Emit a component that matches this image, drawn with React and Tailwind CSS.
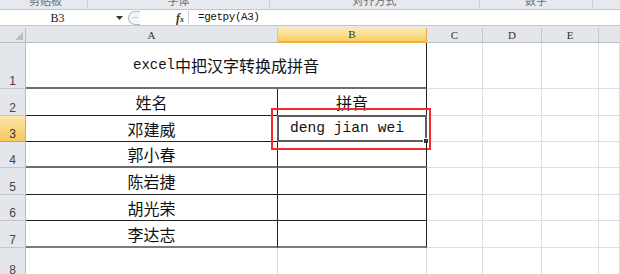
import React from "react";

const CJK = { fontFamily: '"Noto Sans CJK SC", "Noto Sans", sans-serif' };

const rows = [
  { n: 1, h: 46, title: true, bb: "border-b-2 border-b-[#6e6e6e]" },
  { n: 2, h: 27, a: "姓名", b: "拼音", bb: "border-b border-b-[#222]" },
  { n: 3, h: 26, a: "邓建威", b: "deng jian wei", sel: true, bb: "border-b border-b-[#222]" },
  { n: 4, h: 26, a: "郭小春", bb: "border-b-2 border-b-[#6e6e6e]" },
  { n: 5, h: 27, a: "陈岩捷", bb: "border-b border-b-[#222]" },
  { n: 6, h: 26, a: "胡光荣", bb: "border-b border-b-[#222]" },
  { n: 7, h: 27, a: "李达志", bb: "border-b-2 border-b-[#7a7a7a]" },
  { n: 8, h: 30 },
];

function RowHeader({ n, h, sel }) {
  return (
    <div
      className={
        "w-[26px] shrink-0 flex items-end justify-center border-r border-b text-[12px] leading-[13px] " +
        (sel
          ? "bg-gradient-to-b from-[#fce6a8] to-[#f6c75b] border-r-[#e8a53a] border-b-[#c9a25a] text-[#333]"
          : "bg-[#e3e6ea] border-r-[#b7bcc3] border-b-[#c3c7cd] text-[#444]")
      }
      style={{ height: h, fontFamily: '"Liberation Sans", sans-serif' }}
    >
      {n}
    </div>
  );
}

function Light({ w, h, grow }) {
  return (
    <div
      className={"shrink-0 border-r border-b border-[#dcdee0] bg-white " + (grow ? "flex-1" : "")}
      style={{ width: grow ? undefined : w, height: h }}
    />
  );
}

export default function App() {
  return (
    <div className="w-[620px] h-[274px] overflow-hidden bg-white relative select-none">
      {/* ribbon bottom strip */}
      <div className="h-[9px] bg-[#e6e9ee] flex overflow-hidden text-[11px] text-[#6b6f75]" style={CJK}>
        <div className="w-[88px] border-r border-[#c9ced5] flex justify-center"><span className="-mt-[8px] pl-[4px]">剪贴板</span></div>
        <div className="w-[182px] border-r border-[#c9ced5] flex justify-center"><span className="-mt-[8px]">字体</span></div>
        <div className="w-[210px] border-r border-[#c9ced5] flex justify-center"><span className="-mt-[8px]">对齐方式</span></div>
        <div className="w-[113px] border-r border-[#c9ced5] flex justify-center"><span className="-mt-[8px]">数字</span></div>
        <div className="flex-1" />
      </div>

      {/* formula bar */}
      <div className="h-[17px] flex bg-white border-t border-b border-[#c2c7ce]">
        <div className="w-[113px] flex items-center justify-center text-[12px] text-[#222] pl-[2px]" style={{ fontFamily: '"Liberation Serif", serif' }}>
          B3
        </div>
        <div className="w-[12px] flex items-center justify-center">
          <svg width="7" height="4" viewBox="0 0 7 4"><polygon points="0,0 7,0 3.5,4" fill="#333" /></svg>
        </div>
        <div className="w-[3px]" />
        <div className="w-[13px] flex items-center">
          <div className="w-[12px] h-[14px] rounded-l-full border border-r-0 border-[#b5bac2] bg-[#f4f5f7] flex items-center justify-center">
            <div className="w-[5px] h-[1px] bg-[#c7cbd1] ml-[2px]" />
          </div>
        </div>
        <div className="w-[47px] flex items-center justify-end pr-[4px]">
          <span className="italic font-bold text-[12px] text-[#333]" style={{ fontFamily: '"Liberation Serif", serif' }}>
            f<span className="text-[8px]">x</span>
          </span>
        </div>
        <div className="w-[1px] my-[1px] bg-[#c9cdd3]" />
        <div
          className="flex-1 flex items-center pl-[9px] text-[11px] tracking-[-0.45px] text-[#111]"
          style={{ fontFamily: '"Liberation Mono", monospace' }}
        >
          =getpy(A3)
        </div>
      </div>
      <div className="h-[2px] bg-[#e4e7eb]" />

      {/* column header */}
      <div className="h-[15px] flex text-[11px] text-[#333]" style={{ fontFamily: '"Liberation Serif", serif' }}>
        <div className="w-[26px] shrink-0 bg-[#e3e6ea] border-r border-b border-[#b7bcc3] flex items-end justify-end p-[2px]">
          <svg width="8" height="8" viewBox="0 0 8 8"><polygon points="8,0 8,8 0,8" fill="#b9bec5" /></svg>
        </div>
        <div className="w-[252px] shrink-0 bg-[#e3e6ea] border-r border-b border-r-[#c3c7cd] border-b-[#b7bcc3] flex items-center justify-center">A</div>
        <div className="w-[149px] shrink-0 bg-gradient-to-b from-[#fce9b0] to-[#f7cf68] border-r border-b-2 border-r-[#e3ad4c] border-b-[#f1b43a] flex items-center justify-center">B</div>
        <div className="w-[56px] shrink-0 bg-[#e3e6ea] border-r border-b border-r-[#c3c7cd] border-b-[#b7bcc3] flex items-center justify-center">C</div>
        <div className="w-[59px] shrink-0 bg-[#e3e6ea] border-r border-b border-r-[#c3c7cd] border-b-[#b7bcc3] flex items-center justify-center">D</div>
        <div className="w-[57px] shrink-0 bg-[#e3e6ea] border-r border-b border-r-[#c3c7cd] border-b-[#b7bcc3] flex items-center justify-center">E</div>
        <div className="flex-1 bg-[#e3e6ea] border-b border-[#b7bcc3]" />
      </div>

      {/* rows */}
      {rows.map((r) => (
        <div key={r.n} className="flex" style={{ height: r.h }}>
          <RowHeader n={r.n} h={r.h} sel={r.sel} />
          {r.title ? (
            <div
              className={"w-[401px] shrink-0 border-r border-r-[#222] flex items-center justify-center text-[16px] text-[#111] " + r.bb}
              style={{ height: r.h, ...CJK }}
            >
              <span className="text-[14px]" style={{ fontFamily: '"Liberation Mono", monospace' }}>excel</span>
              中把汉字转换成拼音
            </div>
          ) : r.a ? (
            <>
              <div
                className={"w-[252px] shrink-0 border-r border-r-[#222] flex items-center justify-center text-[16px] text-[#111] " + r.bb}
                style={{ height: r.h, ...CJK }}
              >
                {r.a}
              </div>
              <div
                className={"w-[149px] shrink-0 border-r border-r-[#222] relative flex items-center justify-center text-[#111] " + r.bb}
                style={{ height: r.h }}
              >
                {r.sel ? (
                  <>
                    <span className="text-[14.6px] pr-[10px]" style={{ fontFamily: '"Liberation Mono", monospace' }}>
                      {r.b}
                    </span>
                    <div className="absolute -left-[1px] -top-[1px] -right-[1px] -bottom-[1px] border-2 border-[#5c5c5c] pointer-events-none" />
                    <div className="absolute -right-[3px] -bottom-[3px] w-[6px] h-[6px] bg-[#333] border border-white" />
                    <div className="absolute -left-[7px] -top-[8px] -right-[5px] -bottom-[9px] border-2 border-[#f52a2a] pointer-events-none" />
                  </>
                ) : r.b ? (
                  <span className="text-[16px]" style={CJK}>{r.b}</span>
                ) : null}
              </div>
            </>
          ) : (
            <>
              <Light w={252} h={r.h} />
              <Light w={149} h={r.h} />
            </>
          )}
          <Light w={56} h={r.h} />
          <Light w={59} h={r.h} />
          <Light w={57} h={r.h} />
          <Light grow h={r.h} />
        </div>
      ))}
    </div>
  );
}
